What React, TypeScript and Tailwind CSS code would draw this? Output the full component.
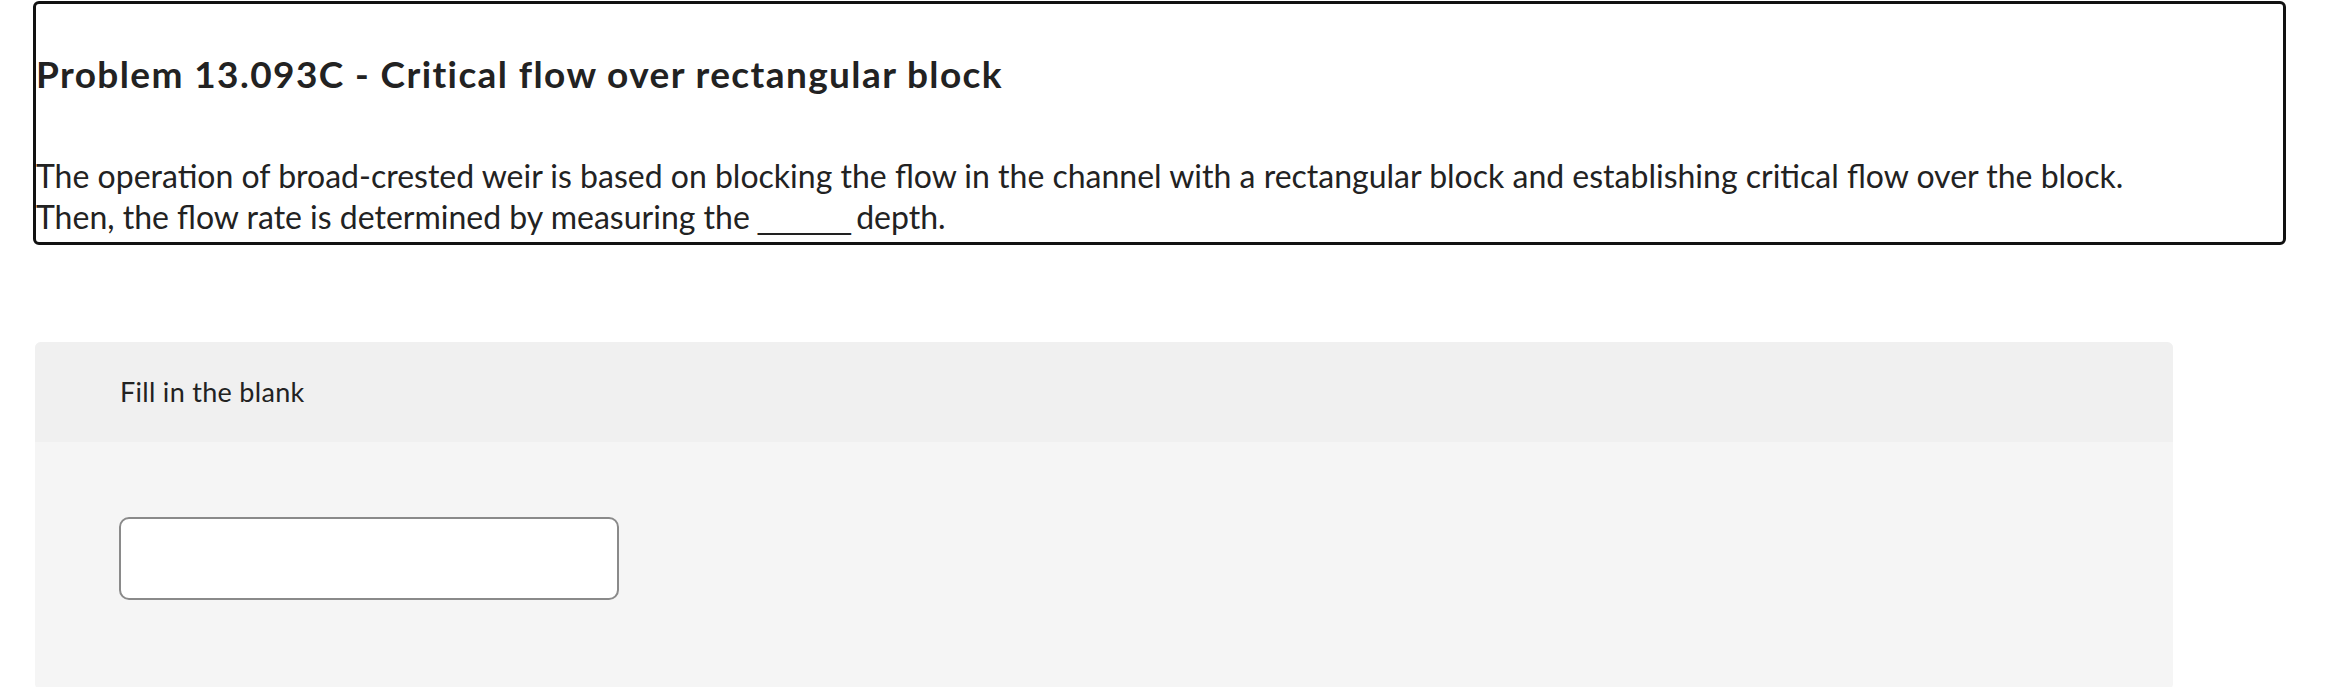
export default function App() {
  return (
    <div className="min-h-screen bg-white font-['Lato',sans-serif] text-[#222]">
      <div className="pt-px pl-[33px]">
        <div className="w-[2253px] rounded-[6px] border-[3px] border-[#111]">
          <h2 className="mt-[48px] text-[37px] leading-[43px] font-bold tracking-[1.4px]">
            Problem 13.093C - Critical flow over rectangular block
          </h2>
          <p className="mb-[3px] mt-[60px] text-[32px] leading-[41px]">
            The operation of broad-crested weir is based on blocking the flow in the channel with a rectangular block and establishing critical flow over the block.
            <br />
            Then, the flow rate is determined by measuring the{' '}
            <span className="font-['Liberation_Sans',sans-serif] tracking-[-2.8px]">______</span>{' '}
            depth.
          </p>
        </div>
      </div>

      <div className="ml-[35px] mt-[97px] w-[2138px] overflow-hidden rounded-[6px] bg-[#f5f5f5]">
        <div className="flex h-[100px] items-center bg-[#f0f0f0] pl-[85px] text-[27px] tracking-[0.3px]">
          Fill in the blank
        </div>
        <div className="pb-[90px] pl-[84px] pt-[75px]">
          <input
            type="text"
            className="block h-[83px] w-[500px] rounded-[10px] border-2 border-[#8a8a8a] bg-white px-4 text-[26px] outline-none"
          />
        </div>
      </div>
    </div>
  )
}
